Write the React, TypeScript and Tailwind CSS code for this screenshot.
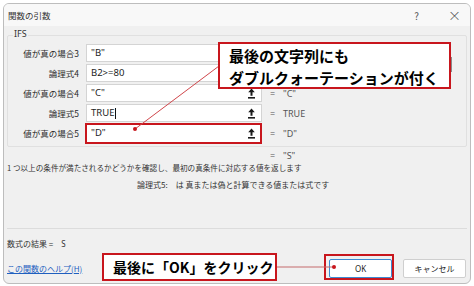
import React from 'react';

const jp = { fontFamily: '"Noto Sans CJK JP", "Noto Sans", sans-serif' };

interface Row {
  label: string;
  value: string;
  result?: string;
  active?: boolean;
  caret?: boolean;
}

const rows: Row[] = [
  { label: '値が真の場合3', value: '"B"' },
  { label: '論理式4', value: 'B2>=80' },
  { label: '値が真の場合4', value: '"C"', result: '"C"' },
  { label: '論理式5', value: 'TRUE', result: 'TRUE', caret: true },
  { label: '値が真の場合5', value: '"D"', result: '"D"', active: true },
];

// collapse-dialog button glyph: arrow up standing on a bar
function RefIcon() {
  return (
    <svg width="9" height="11" viewBox="0 0 9 11" className="shrink-0">
      <path d="M4.5 0.5 L1.2 4.2 H3.5 V7.8 H5.5 V4.2 H7.8 Z" fill="#1a1a1a" />
      <rect x="1" y="9" width="7" height="1.6" fill="#1a1a1a" />
    </svg>
  );
}

function ArgRow({ row }: { row: Row }) {
  return (
    <div className="flex items-center h-[18px]">
      <div className="w-[72px] text-right text-[8.5px] text-[#2b2b2b] leading-none pr-[1px]">{row.label}</div>
      <div
        className={
          row.active
            ? 'ml-[5px] w-[177px] h-[21px] -my-[1px] bg-white border-2 border-[#c8161d] flex items-center pl-[4px] pr-[2px]'
            : 'ml-[6px] w-[176px] h-[18px] bg-white border border-[#d4d4d4] flex items-center pl-[4px] pr-[3px]'
        }
      >
        <span className="flex-1 flex items-center text-[9.5px] text-[#222] leading-none" style={{ fontFamily: '"Noto Sans", sans-serif' }}>
          {row.value}
          {row.caret && <span className="ml-[1px] w-px h-[11px] bg-[#111]" />}
        </span>
        <span className="w-[14px] flex justify-center">
          <RefIcon />
        </span>
      </div>
      {row.result !== undefined && (
        <div className="flex items-center text-[9px] text-[#555] leading-none" style={{ fontFamily: '"Noto Sans", sans-serif' }}>
          <span className="ml-[8px] w-[6px]">=</span>
          <span className="ml-[7px]">{row.result}</span>
        </div>
      )}
    </div>
  );
}

export default function App() {
  return (
    <div className="relative w-[474px] h-[286px] bg-white overflow-hidden" style={jp}>
      <div className="absolute left-[3px] top-[3px] w-[468px] h-[281px] rounded-[6px] border border-[#bdbdbd] bg-[#f0f0f0] overflow-hidden flex flex-col">
        {/* title bar */}
        <div className="h-[22px] bg-[#f8f8f8] flex items-center pl-[4px] text-[8.5px] text-[#333]">
          <span>関数の引数</span>
          <span className="ml-auto mr-[29px] text-[10px] text-[#555]">?</span>
          <span className="mr-[9px] text-[13px] text-[#444] font-light">×</span>
        </div>

        {/* group box */}
        <div className="relative mt-[9px] ml-[3px] mr-[3px] h-[112px] border border-[#e0e0e0] rounded-[2px]">
          <span className="absolute -top-[7px] left-[5px] px-[1px] bg-[#f0f0f0] text-[9px] text-[#333] leading-none" style={{ fontFamily: '"Noto Sans", sans-serif' }}>
            IFS
          </span>
          <div className="flex flex-col gap-[2px] pt-[8px]">
            {rows.map((r) => (
              <ArgRow key={r.label} row={r} />
            ))}
          </div>
          <div className="absolute right-[14px] top-[21px] w-[2px] h-[15px] bg-[#8a8a8a]" />
        </div>

        {/* summary */}
        <div className="ml-[266px] mt-[4px] text-[9px] text-[#555] leading-none flex" style={{ fontFamily: '"Noto Sans", sans-serif' }}>
          <span className="w-[6px]">=</span>
          <span className="ml-[7px]">"S"</span>
        </div>
        <div className="ml-[3px] mt-[4px] text-[7.6px] text-[#333] leading-none whitespace-nowrap">
          1 つ以上の条件が満たされるかどうかを確認し、最初の真条件に対応する値を返します
        </div>
        <div className="ml-[133px] mt-[9px] text-[8px] text-[#333] leading-none whitespace-nowrap flex">
          <span>論理式5:</span>
          <span className="ml-[8px]">は 真または偽と計算できる値または式です</span>
        </div>

        <div className="mt-[39px] mx-[3px] h-px bg-[#dcdcdc]" />

        <div className="ml-[3px] mt-[11px] text-[8px] text-[#333] leading-none flex">
          <span>数式の結果 =</span>
          <span className="ml-[8px]" style={{ fontFamily: '"Noto Sans", sans-serif' }}>S</span>
        </div>

        <div className="flex items-center mt-[9px] h-[24px]">
          <span className="ml-[3px] text-[8px] text-[#1f5fbf] underline leading-none">この関数のヘルプ(H)</span>
          <div className="ml-auto mr-[4px] flex items-center gap-[11px]">
            <div className="w-[63px] h-[19px] bg-white border border-[#3c8ad1] rounded-[2px] flex items-center justify-center text-[8px] text-[#222]" style={{ fontFamily: '"Noto Sans", sans-serif' }}>
              OK
            </div>
            <div className="w-[63px] h-[19px] bg-white border border-[#cfcfcf] rounded-[2px] flex items-center justify-center text-[8px] text-[#222]">
              キャンセル
            </div>
          </div>
        </div>
      </div>

      {/* red highlight around OK */}
      <div className="absolute left-[324px] top-[254px] w-[70px] h-[26px] border-2 border-[#c8161d]" />

      {/* connector lines */}
      <svg className="absolute inset-0 pointer-events-none" width="474" height="286">
        <line x1="219" y1="66" x2="135" y2="129" stroke="#d0464b" strokeWidth="1" />
        <circle cx="135" cy="129" r="2" fill="#c8161d" />
        <line x1="276" y1="267" x2="334" y2="267" stroke="#c46a6d" strokeWidth="1" />
        <circle cx="334" cy="267" r="2" fill="#c8161d" />
      </svg>

      {/* callout 1 */}
      <div className="absolute left-[218px] top-[42px] w-[233px] h-[47px] bg-white border-2 border-[#c8161d] pl-[9px] pt-[1px] text-[15px] font-bold text-black leading-[22px] whitespace-nowrap">
        <div>最後の文字列にも</div>
        <div>ダブルクォーテーションが付く</div>
      </div>

      {/* callout 2 */}
      <div className="absolute left-[102px] top-[253px] w-[175px] h-[28px] bg-white border-2 border-[#c8161d] flex items-center pl-[9px] text-[14px] font-bold text-black leading-none whitespace-nowrap">
        最後に「OK」をクリック
      </div>
    </div>
  );
}
